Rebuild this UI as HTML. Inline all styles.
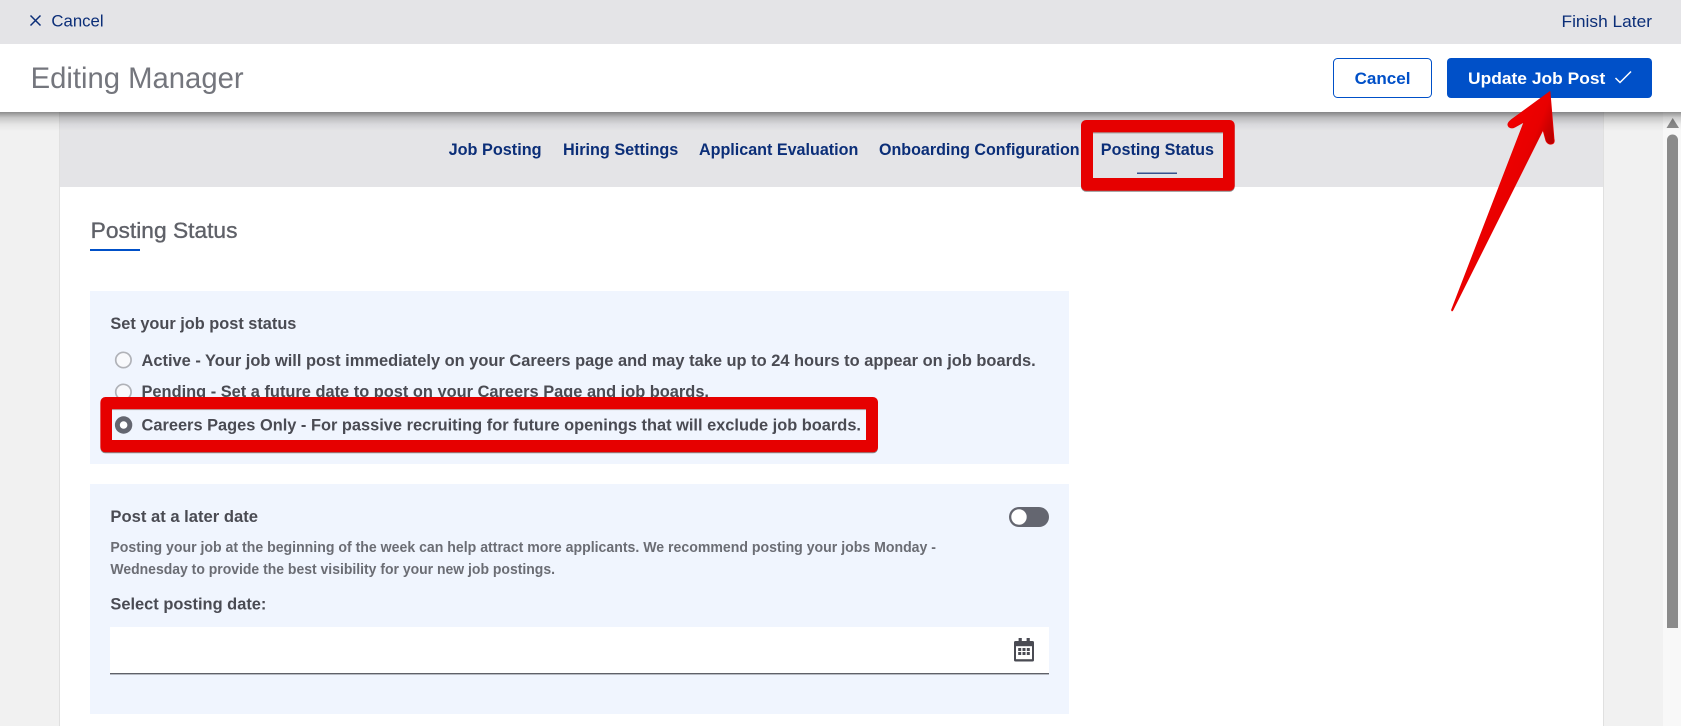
<!DOCTYPE html>
<html lang="en">
<head>
<meta charset="utf-8">
<title>Editing Manager</title>
<style>
html,body{margin:0;padding:0;width:1681px;height:726px;overflow:hidden;background:#fff}
svg{display:block}
text{font-family:"Liberation Sans",sans-serif;font-size:17px}
.nav{fill:#0b2e78;font-weight:700}
.top{fill:#0b2e78}
.body{fill:#4a4b53;font-weight:700}
.desc{fill:#6b6d74;font-weight:700;font-size:15px}
</style>
</head>
<body>
<svg xmlns="http://www.w3.org/2000/svg" width="1681" height="726" viewBox="0 0 1681 726">
<defs>
<linearGradient id="sh" x1="0" y1="0" x2="0" y2="1">
<stop offset="0" stop-color="#000" stop-opacity=".42"/>
<stop offset=".3" stop-color="#000" stop-opacity=".18"/>
<stop offset=".65" stop-color="#000" stop-opacity=".05"/>
<stop offset="1" stop-color="#000" stop-opacity="0"/>
</linearGradient>
<linearGradient id="ar" x1="1485" y1="190" x2="1525" y2="206" gradientUnits="userSpaceOnUse">
<stop offset="0" stop-color="#f00000"/>
<stop offset=".6" stop-color="#e80000"/>
<stop offset="1" stop-color="#b80000"/>
</linearGradient>
</defs>

<!-- backgrounds -->
<rect x="0" y="0" width="1681" height="726" fill="#f1f1f1"/>
<rect x="1663" y="112" width="18" height="614" fill="#f8f8f8"/>
<rect x="59" y="112" width="1" height="614" fill="#e0e0e0"/>
<rect x="1603" y="112" width="1" height="614" fill="#e0e0e0"/>
<rect x="60" y="112" width="1543" height="614" fill="#fff"/>
<rect x="60" y="112" width="1543" height="75" fill="#e4e4e7"/>

<!-- scrollbar -->
<path d="M1672.7 118L1679 128H1666.5Z" fill="#8b8b8b"/>
<path d="M1667 140a5.5 5.5 0 0 1 11 0V628H1667Z" fill="#8b8b8b"/>

<!-- tabs -->
<text class="nav" x="448.6" y="155" textLength="93" lengthAdjust="spacingAndGlyphs">Job Posting</text>
<text class="nav" x="563" y="155" textLength="115.3" lengthAdjust="spacingAndGlyphs">Hiring Settings</text>
<text class="nav" x="699" y="155" textLength="159.3" lengthAdjust="spacingAndGlyphs">Applicant Evaluation</text>
<text class="nav" x="879" y="155" textLength="200.6" lengthAdjust="spacingAndGlyphs">Onboarding Configuration</text>

<!-- heading -->
<text x="90.7" y="238" style="font-size:22.5px;stroke:#5f6168;stroke-width:.35" fill="#5f6168" textLength="146.8" lengthAdjust="spacingAndGlyphs">Posting Status</text>
<rect x="90" y="249" width="50" height="2" fill="#0050c8"/>

<!-- panel 1 -->
<rect x="90" y="291" width="979" height="173" fill="#f0f5fe"/>
<text class="body" x="110.4" y="329" textLength="186" lengthAdjust="spacingAndGlyphs">Set your job post status</text>
<circle cx="123.4" cy="360" r="7.7" fill="#f8f9fc" stroke="#b0b2b8" stroke-width="1.7"/>
<text class="body" x="141.5" y="366" textLength="894.2" lengthAdjust="spacingAndGlyphs">Active - Your job will post immediately on your Careers page and may take up to 24 hours to appear on job boards.</text>
<circle cx="123.4" cy="392" r="7.7" fill="#f8f9fc" stroke="#b0b2b8" stroke-width="1.7"/>
<text class="body" x="141.5" y="397" textLength="567.5" lengthAdjust="spacingAndGlyphs">Pending - Set a future date to post on your Careers Page and job boards.</text>

<!-- panel 2 -->
<rect x="90" y="484" width="979" height="230" fill="#f0f5fe"/>
<text class="body" x="110.4" y="522.2" textLength="147.6" lengthAdjust="spacingAndGlyphs">Post at a later date</text>
<text class="desc" x="110.4" y="552.2" textLength="825.6" lengthAdjust="spacingAndGlyphs">Posting your job at the beginning of the week can help attract more applicants. We recommend posting your jobs Monday -</text>
<text class="desc" x="110.4" y="574.2" textLength="444.6" lengthAdjust="spacingAndGlyphs">Wednesday to provide the best visibility for your new job postings.</text>
<text class="body" x="110.4" y="609.5" textLength="156" lengthAdjust="spacingAndGlyphs">Select posting date:</text>
<rect x="1009" y="507" width="40" height="20" rx="10" fill="#646670"/>
<circle cx="1019" cy="517" r="7.7" fill="#fff"/>
<rect x="110" y="627" width="939" height="46" fill="#fff"/>
<rect x="110" y="673" width="939" height="1.4" fill="#5f6168"/>

<!-- calendar -->
<rect x="1018.6" y="638" width="3.2" height="5" fill="#4a4b53"/>
<rect x="1026.6" y="638" width="3.2" height="5" fill="#4a4b53"/>
<rect x="1014" y="641" width="20" height="20.5" rx="1.5" fill="#4a4b53"/>
<rect x="1016" y="646.2" width="16" height="13" fill="#fff"/>
<g fill="#4a4b53">
<rect x="1018.2" y="648" width="3" height="3"/>
<rect x="1022.5" y="648" width="3" height="3"/>
<rect x="1026.8" y="648" width="3" height="3"/>
<rect x="1018.2" y="652" width="3" height="3"/>
<rect x="1022.5" y="652" width="3" height="3"/>
<rect x="1026.8" y="652" width="3" height="3"/>
</g>

<!-- header shadow -->
<rect x="0" y="112" width="1681" height="19" fill="url(#sh)"/>

<!-- top bar + header -->
<rect x="0" y="0" width="1681" height="44" fill="#e4e4e7"/>
<rect x="0" y="44" width="1681" height="68" fill="#fff"/>
<path d="M30.5 15.5L40.5 25.5M40.5 15.5L30.5 25.5" stroke="#0b2e78" stroke-width="1.5" fill="none"/>
<text class="top" x="51.4" y="26.5" textLength="52.2" lengthAdjust="spacingAndGlyphs">Cancel</text>
<text class="top" x="1561.5" y="27" textLength="90.5" lengthAdjust="spacingAndGlyphs">Finish Later</text>
<text x="30.6" y="88" style="font-size:29.5px" fill="#74767d" textLength="213" lengthAdjust="spacingAndGlyphs">Editing Manager</text>

<!-- buttons -->
<rect x="1333.5" y="58.5" width="98" height="39" rx="4" fill="#fff" stroke="#0050c8" stroke-width="1"/>
<text x="1354.6" y="84" fill="#0050c8" font-weight="700" textLength="55.9" lengthAdjust="spacingAndGlyphs">Cancel</text>
<rect x="1447" y="58" width="205" height="40" rx="4" fill="#0050c8"/>
<text x="1468" y="84" fill="#fff" font-weight="700" textLength="137.3" lengthAdjust="spacingAndGlyphs">Update Job Post</text>
<path d="M1615.5 78L1620 82.5L1631 71.5" stroke="#fff" stroke-width="1.5" fill="none"/>

<!-- tab highlight -->
<rect x="1081" y="121" width="153.7" height="70.7" rx="5" fill="#8a8a8a"/>
<rect x="1081" y="120" width="153.7" height="70.7" rx="5" fill="#e60000"/>
<rect x="1093" y="132.4" width="130" height="45.6" fill="#e3e3e6"/>
<rect x="1093" y="132.4" width="130" height="1" fill="#9a9a9a"/>
<text class="nav" x="1100.8" y="155" textLength="113.2" lengthAdjust="spacingAndGlyphs">Posting Status</text>
<rect x="1137" y="172.6" width="40" height="1.2" fill="#0b2e78"/>

<!-- status highlight -->
<rect x="100.4" y="398" width="777.6" height="55.3" rx="5" fill="#8a8a8a"/>
<rect x="100.4" y="397" width="777.6" height="55.3" rx="5" fill="#e60000"/>
<rect x="112" y="409.3" width="754" height="30.7" fill="#f0f5fe"/>
<rect x="112" y="409.3" width="754" height=".8" fill="#a8a8a8"/>
<circle cx="123.6" cy="425" r="8.7" fill="#646670"/>
<circle cx="123.6" cy="425" r="3.8" fill="#fff"/>
<text class="body" x="141.5" y="430.7" textLength="719.5" lengthAdjust="spacingAndGlyphs">Careers Pages Only - For passive recruiting for future openings that will exclude job boards.</text>

<!-- arrow -->
<path d="M1550 91.5L1511 120Q1506 124 1509 127Q1512 129 1515 127L1524 122L1451.5 310Q1452 312 1453 310L1543 130L1546 141Q1548 145 1552 144Q1555 143 1554 139Z" fill="url(#ar)" stroke="#e60000" stroke-width=".8" stroke-linejoin="round"/>
</svg>
</body>
</html>
